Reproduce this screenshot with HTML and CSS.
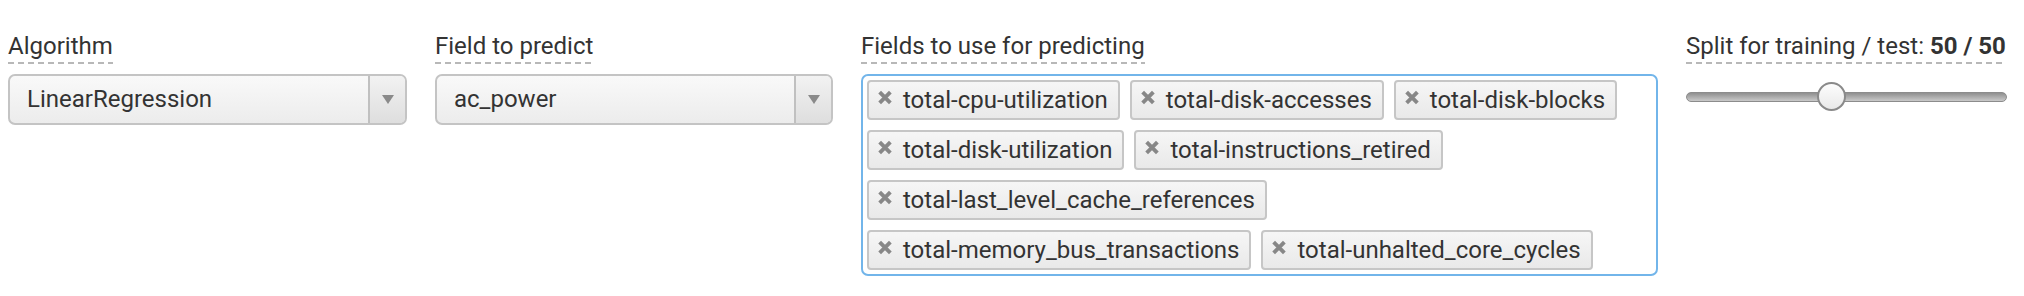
FILE: index.html
```html
<!DOCTYPE html>
<html lang="en">
<head>
  <meta charset="UTF-8">
  <title>Model settings</title>
  <link rel="stylesheet" href="styles.css">
</head>
<body>
  <div class="settings">
    <div class="field">
      <label class="field-label">Algorithm</label>
      <div class="select">
        <span class="select-value">LinearRegression</span>
        <span class="select-arrow"><span class="caret"></span></span>
      </div>
    </div>

    <div class="field">
      <label class="field-label">Field to predict</label>
      <div class="select">
        <span class="select-value">ac_power</span>
        <span class="select-arrow"><span class="caret"></span></span>
      </div>
    </div>

    <div class="field">
      <label class="field-label">Fields to use for predicting</label>
      <ul class="tags">
        <li class="tag"><svg class="tag-remove" viewBox="0 0 14 14"><path d="M2 2L12 12M12 2L2 12"/></svg>total-cpu-utilization</li>
        <li class="tag"><svg class="tag-remove" viewBox="0 0 14 14"><path d="M2 2L12 12M12 2L2 12"/></svg>total-disk-accesses</li>
        <li class="tag"><svg class="tag-remove" viewBox="0 0 14 14"><path d="M2 2L12 12M12 2L2 12"/></svg>total-disk-blocks</li>
        <li class="tag"><svg class="tag-remove" viewBox="0 0 14 14"><path d="M2 2L12 12M12 2L2 12"/></svg>total-disk-utilization</li>
        <li class="tag"><svg class="tag-remove" viewBox="0 0 14 14"><path d="M2 2L12 12M12 2L2 12"/></svg>total-instructions_retired</li>
        <li class="tag"><svg class="tag-remove" viewBox="0 0 14 14"><path d="M2 2L12 12M12 2L2 12"/></svg>total-last_level_cache_references</li>
        <li class="tag"><svg class="tag-remove" viewBox="0 0 14 14"><path d="M2 2L12 12M12 2L2 12"/></svg>total-memory_bus_transactions</li>
        <li class="tag"><svg class="tag-remove" viewBox="0 0 14 14"><path d="M2 2L12 12M12 2L2 12"/></svg>total-unhalted_core_cycles</li>
      </ul>
    </div>

    <div class="field">
      <label class="field-label">Split for training / test: <b>50 / 50</b></label>
      <div class="slider">
        <div class="slider-track"></div>
        <div class="slider-thumb" style="left: 40.8%"></div>
      </div>
    </div>
  </div>
</body>
</html>
```

FILE: styles.css
```css
* { margin: 0; padding: 0; box-sizing: border-box; }

body {
  font-family: Roboto, 'Liberation Sans', sans-serif;
  font-size: 24px;
  color: #333;
  background: #fff;
  padding: 32px 8px 0;
}

.settings {
  display: grid;
  grid-template-columns: 399px 398px 797px 321px;
  column-gap: 28px;
  align-items: start;
}

.field-label {
  display: inline-block;
  line-height: 28px;
  padding-bottom: 4px;
  margin-bottom: 10px;
  background: repeating-linear-gradient(to right, #b8b8b8 0 6px, transparent 6px 10px) left bottom / 100% 2px no-repeat;
}

.field-label b {
  font-weight: 700;
}

.select {
  display: flex;
  height: 51px;
  border: 2px solid #c4c4c4;
  border-radius: 7px;
  background: linear-gradient(#f9f9f9, #ececec);
  overflow: hidden;
}

.select-value {
  flex: 1;
  line-height: 47px;
  padding-left: 17px;
}

.select-arrow {
  width: 37px;
  border-left: 2px solid #c0c0c0;
  background: linear-gradient(#f2f2f2, #dedede);
  display: flex;
  justify-content: center;
  align-items: center;
}

.caret {
  width: 0;
  height: 0;
  border-left: 6px solid transparent;
  border-right: 6px solid transparent;
  border-top: 9px solid #8a8a8a;
  margin-left: 1px;
}

.tags {
  list-style: none;
  display: flex;
  flex-wrap: wrap;
  gap: 10px;
  padding: 4px 20px 4px 4px;
  border: 2px solid #72b5ea;
  border-radius: 7px;
}

.tag {
  display: flex;
  align-items: center;
  height: 40px;
  padding: 0 10px 0 8px;
  border: 2px solid #c6c6c6;
  border-radius: 4px;
  background: linear-gradient(#f6f6f6, #e9e9e9);
  line-height: 28px;
  white-space: nowrap;
}

.tag-remove {
  width: 16px;
  height: 15px;
  margin: -5px 10px 0 0;
  fill: none;
  stroke: #878787;
  stroke-width: 3.6;
}

.slider {
  position: relative;
  height: 29px;
  margin-top: 8px;
}

.slider-track {
  position: absolute;
  left: 0;
  right: 0;
  top: 10px;
  height: 10px;
  border: 1px solid #8c8c8c;
  border-radius: 5px;
  background: linear-gradient(#8f8f8f, #c9c9c9);
}

.slider-thumb {
  position: absolute;
  top: 0;
  width: 29px;
  height: 29px;
  border: 2px solid #8a8a8a;
  border-radius: 50%;
  background: linear-gradient(#fdfdfd, #e9e9e9);
}
```
